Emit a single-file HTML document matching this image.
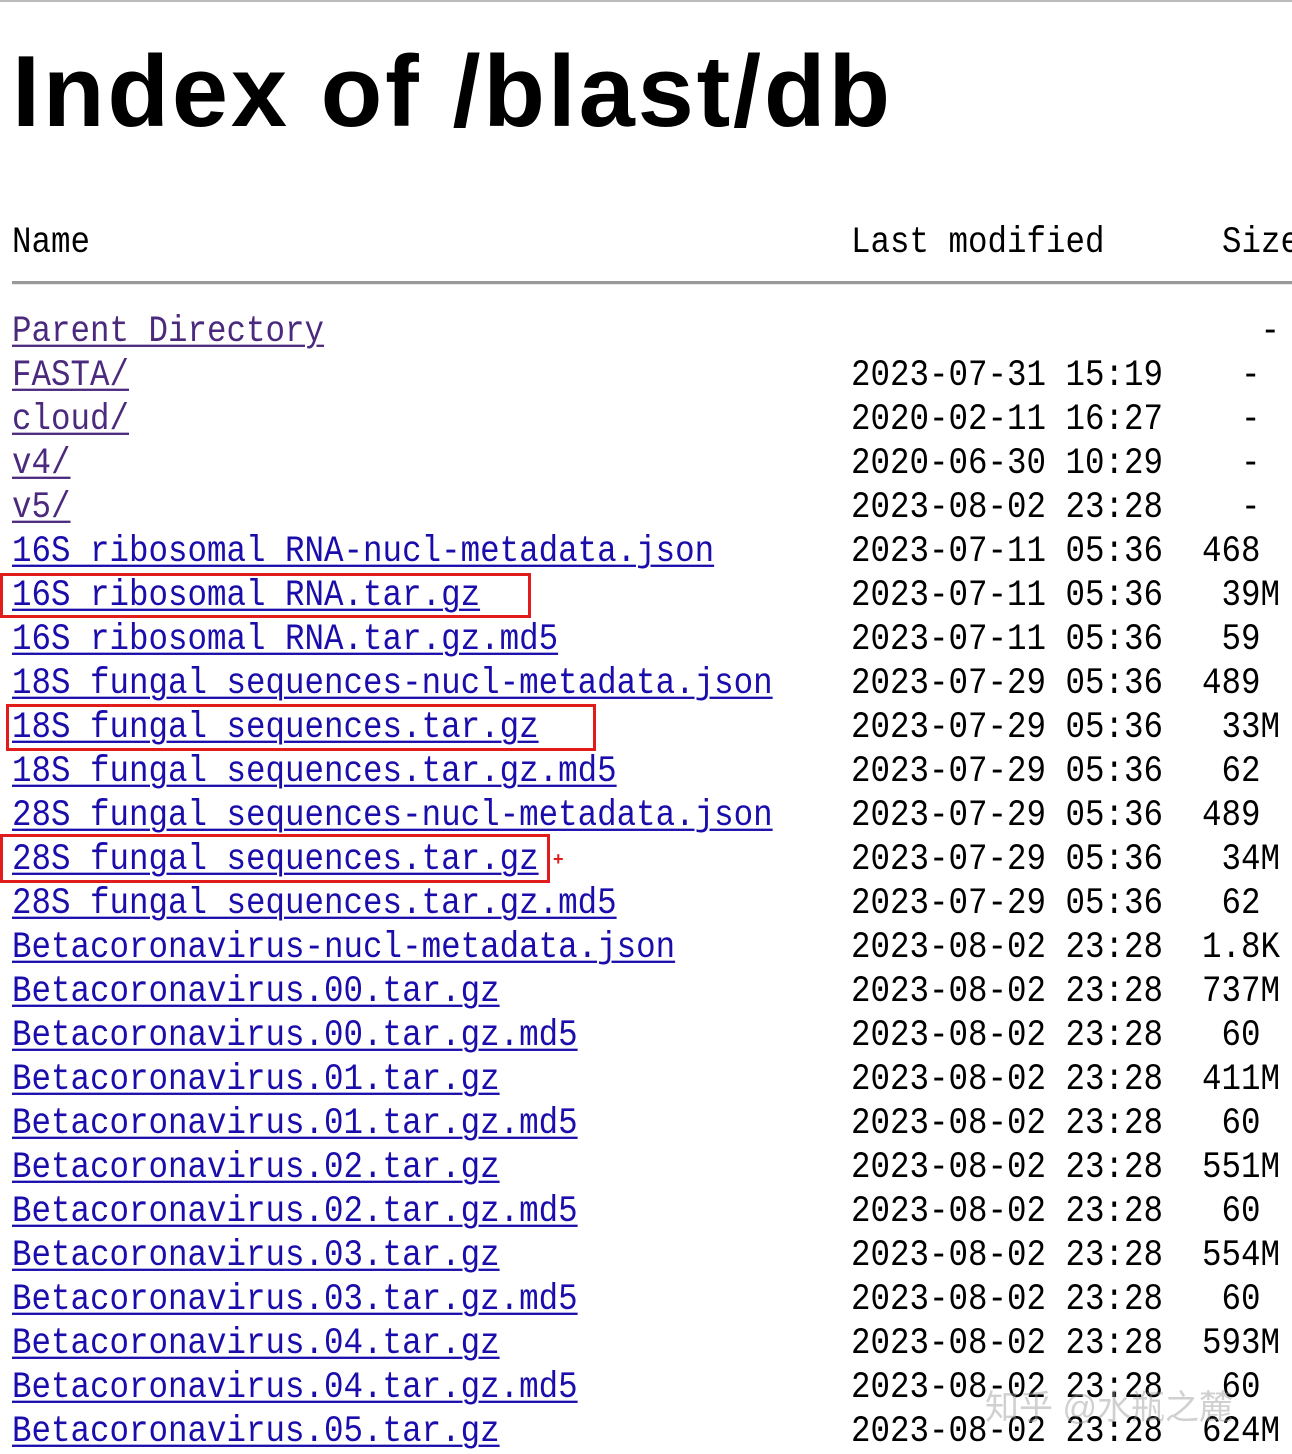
<!DOCTYPE html>
<html><head><meta charset="utf-8"><style>
html,body{margin:0;padding:0;background:#fff;width:1292px;height:1454px;overflow:hidden;position:relative}
.top{position:absolute;left:0;top:0;width:1292px;height:2px;background:#bbb}
h1{position:absolute;left:12px;top:32px;margin:0;font:bold 101px/120px "Liberation Sans",sans-serif;color:#000;letter-spacing:2.8px}
.r{position:absolute;left:0;width:1292px;height:44px;font:32.5px/44px "Liberation Mono",monospace;white-space:pre;transform:scaleY(1.15);transform-origin:0 50%}
.r span{position:absolute;top:0}
.n{left:12px}.d{left:851px}.s{right:12px}
a{color:#1a0dab;text-decoration:underline;text-decoration-thickness:2px;text-underline-offset:3px}
a.v{color:#4b2a7d}
.hr{position:absolute;left:12px;top:281px;width:1280px;height:3px;background:#999;border-bottom:1px solid #e8e8e8}
.box{position:absolute;border:3px solid #e21b1b;box-sizing:border-box}
.wm{position:absolute;left:985px;top:1380px;font:34px "Liberation Sans","Noto Sans CJK SC",sans-serif;color:rgba(150,150,150,0.45)}
</style></head><body>
<div class="top"></div>
<h1>Index of /blast/db</h1>
<div class="r" style="top:221px"><span class="n">Name</span><span class="d">Last modified</span><span style="left:1222px">Size</span></div>
<div class="hr"></div>
<div class="r" style="top:310px"><span class="n"><a class="v">Parent Directory</a></span><span class="s">-</span></div>
<div class="r" style="top:354px"><span class="n"><a class="v">FASTA/</a></span><span class="d">2023-07-31 15:19</span><span class="s">- </span></div>
<div class="r" style="top:398px"><span class="n"><a class="v">cloud/</a></span><span class="d">2020-02-11 16:27</span><span class="s">- </span></div>
<div class="r" style="top:442px"><span class="n"><a class="v">v4/</a></span><span class="d">2020-06-30 10:29</span><span class="s">- </span></div>
<div class="r" style="top:486px"><span class="n"><a class="v">v5/</a></span><span class="d">2023-08-02 23:28</span><span class="s">- </span></div>
<div class="r" style="top:530px"><span class="n"><a>16S ribosomal RNA-nucl-metadata.json</a></span><span class="d">2023-07-11 05:36</span><span class="s">468 </span></div>
<div class="r" style="top:574px"><span class="n"><a>16S ribosomal RNA.tar.gz</a></span><span class="d">2023-07-11 05:36</span><span class="s">39M</span></div>
<div class="r" style="top:618px"><span class="n"><a>16S ribosomal RNA.tar.gz.md5</a></span><span class="d">2023-07-11 05:36</span><span class="s">59 </span></div>
<div class="r" style="top:662px"><span class="n"><a>18S fungal sequences-nucl-metadata.json</a></span><span class="d">2023-07-29 05:36</span><span class="s">489 </span></div>
<div class="r" style="top:706px"><span class="n"><a>18S fungal sequences.tar.gz</a></span><span class="d">2023-07-29 05:36</span><span class="s">33M</span></div>
<div class="r" style="top:750px"><span class="n"><a>18S fungal sequences.tar.gz.md5</a></span><span class="d">2023-07-29 05:36</span><span class="s">62 </span></div>
<div class="r" style="top:794px"><span class="n"><a>28S fungal sequences-nucl-metadata.json</a></span><span class="d">2023-07-29 05:36</span><span class="s">489 </span></div>
<div class="r" style="top:838px"><span class="n"><a>28S fungal sequences.tar.gz</a></span><span class="d">2023-07-29 05:36</span><span class="s">34M</span></div>
<div class="r" style="top:882px"><span class="n"><a>28S fungal sequences.tar.gz.md5</a></span><span class="d">2023-07-29 05:36</span><span class="s">62 </span></div>
<div class="r" style="top:926px"><span class="n"><a>Betacoronavirus-nucl-metadata.json</a></span><span class="d">2023-08-02 23:28</span><span class="s">1.8K</span></div>
<div class="r" style="top:970px"><span class="n"><a>Betacoronavirus.00.tar.gz</a></span><span class="d">2023-08-02 23:28</span><span class="s">737M</span></div>
<div class="r" style="top:1014px"><span class="n"><a>Betacoronavirus.00.tar.gz.md5</a></span><span class="d">2023-08-02 23:28</span><span class="s">60 </span></div>
<div class="r" style="top:1058px"><span class="n"><a>Betacoronavirus.01.tar.gz</a></span><span class="d">2023-08-02 23:28</span><span class="s">411M</span></div>
<div class="r" style="top:1102px"><span class="n"><a>Betacoronavirus.01.tar.gz.md5</a></span><span class="d">2023-08-02 23:28</span><span class="s">60 </span></div>
<div class="r" style="top:1146px"><span class="n"><a>Betacoronavirus.02.tar.gz</a></span><span class="d">2023-08-02 23:28</span><span class="s">551M</span></div>
<div class="r" style="top:1190px"><span class="n"><a>Betacoronavirus.02.tar.gz.md5</a></span><span class="d">2023-08-02 23:28</span><span class="s">60 </span></div>
<div class="r" style="top:1234px"><span class="n"><a>Betacoronavirus.03.tar.gz</a></span><span class="d">2023-08-02 23:28</span><span class="s">554M</span></div>
<div class="r" style="top:1278px"><span class="n"><a>Betacoronavirus.03.tar.gz.md5</a></span><span class="d">2023-08-02 23:28</span><span class="s">60 </span></div>
<div class="r" style="top:1322px"><span class="n"><a>Betacoronavirus.04.tar.gz</a></span><span class="d">2023-08-02 23:28</span><span class="s">593M</span></div>
<div class="r" style="top:1366px"><span class="n"><a>Betacoronavirus.04.tar.gz.md5</a></span><span class="d">2023-08-02 23:28</span><span class="s">60 </span></div>
<div class="r" style="top:1410px"><span class="n"><a>Betacoronavirus.05.tar.gz</a></span><span class="d">2023-08-02 23:28</span><span class="s">624M</span></div>
<div class="box" style="left:0;top:573px;width:531px;height:45px"></div>
<div class="box" style="left:6px;top:704px;width:590px;height:47px"></div>
<div class="box" style="left:0;top:834px;width:550px;height:49px"></div>
<div style="position:absolute;left:553px;top:849px;color:#e21b1b;font:bold 18px 'Liberation Sans',sans-serif">+</div>
<div class="wm">知乎 @水瓶之麓</div>
</body></html>
